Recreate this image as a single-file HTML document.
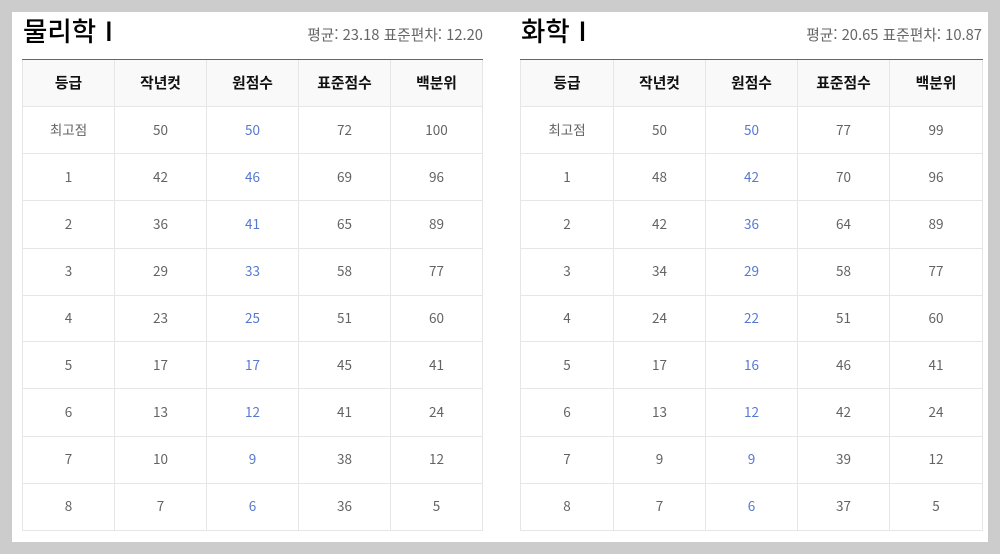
<!DOCTYPE html>
<html lang="ko">
<head>
<meta charset="utf-8">
<title>등급컷</title>
<style>
html,body{margin:0;padding:0;width:1000px;height:554px;overflow:hidden;background:#ccc;}
body{font-family:"Liberation Sans","Noto Sans CJK KR",sans-serif;}
.wrap{position:absolute;left:12px;top:12px;width:976px;height:530px;background:#fff;}
.sec{font-family:"Noto Sans CJK KR","Liberation Sans",sans-serif;}
h2{position:absolute;top:0;margin:0;font-size:26.5px;line-height:36px;font-weight:500;color:#000;white-space:nowrap;}
h2 span{margin-left:-8px;}
.stat{position:absolute;top:25px;font-size:14.75px;line-height:20px;color:#666;white-space:nowrap;text-align:right;}
.rule{position:absolute;top:59px;height:1px;background:#666;z-index:2;}
table{position:absolute;top:59px;border-collapse:collapse;table-layout:fixed;font-family:"Noto Sans CJK KR","Liberation Sans",sans-serif;}
th,td{border:1px solid #e6e6e6;padding:0 0 2px;text-align:center;font-size:13.5px;line-height:16px;color:#636363;font-weight:400;box-sizing:border-box;}
th{background:#f9f9f9;color:#111;font-weight:700;font-size:14.8px;border-top:1px solid #666;padding:0;}
td.b{color:#5579d0;}
tr{height:47px;}
tr.t{height:48px;}
tr.t td{padding-bottom:4px;}
tr.s{height:46px;}
tr.s td{padding-bottom:3px;}
tr.u td{padding-bottom:3px;}
tr.v td{padding-bottom:4px;}
</style>
</head>
<body>
<div class="wrap"></div>
<div class="sec">
<h2 style="left:23px;top:12px">물리학 <span>Ⅰ</span></h2>
<div class="stat" style="right:517px">평균: 23.18 표준편차: 12.20</div>
<div class="rule" style="left:22px;width:461px"></div>
<table style="left:22px;width:461px">
<colgroup><col style="width:92px"><col style="width:92px"><col style="width:92px"><col style="width:92px"><col style="width:92px"></colgroup>
<tr><th>등급</th><th>작년컷</th><th>원점수</th><th>표준점수</th><th>백분위</th></tr>
<tr><td>최고점</td><td>50</td><td class="b">50</td><td>72</td><td>100</td></tr>
<tr><td>1</td><td>42</td><td class="b">46</td><td>69</td><td>96</td></tr>
<tr class="t"><td>2</td><td>36</td><td class="b">41</td><td>65</td><td>89</td></tr>
<tr class="v"><td>3</td><td>29</td><td class="b">33</td><td>58</td><td>77</td></tr>
<tr class="s"><td>4</td><td>23</td><td class="b">25</td><td>51</td><td>60</td></tr>
<tr class="u"><td>5</td><td>17</td><td class="b">17</td><td>45</td><td>41</td></tr>
<tr class="t"><td>6</td><td>13</td><td class="b">12</td><td>41</td><td>24</td></tr>
<tr class="v"><td>7</td><td>10</td><td class="b">9</td><td>38</td><td>12</td></tr>
<tr class="v"><td>8</td><td>7</td><td class="b">6</td><td>36</td><td>5</td></tr>
</table>
</div>
<div class="sec">
<h2 style="left:521px;top:12px">화학 <span>Ⅰ</span></h2>
<div class="stat" style="right:18px">평균: 20.65 표준편차: 10.87</div>
<div class="rule" style="left:520px;width:463px"></div>
<table style="left:520px;width:463px">
<colgroup><col style="width:93px"><col style="width:92px"><col style="width:92px"><col style="width:92px"><col style="width:93px"></colgroup>
<tr><th>등급</th><th>작년컷</th><th>원점수</th><th>표준점수</th><th>백분위</th></tr>
<tr><td>최고점</td><td>50</td><td class="b">50</td><td>77</td><td>99</td></tr>
<tr><td>1</td><td>48</td><td class="b">42</td><td>70</td><td>96</td></tr>
<tr class="t"><td>2</td><td>42</td><td class="b">36</td><td>64</td><td>89</td></tr>
<tr class="v"><td>3</td><td>34</td><td class="b">29</td><td>58</td><td>77</td></tr>
<tr class="s"><td>4</td><td>24</td><td class="b">22</td><td>51</td><td>60</td></tr>
<tr class="u"><td>5</td><td>17</td><td class="b">16</td><td>46</td><td>41</td></tr>
<tr class="t"><td>6</td><td>13</td><td class="b">12</td><td>42</td><td>24</td></tr>
<tr class="v"><td>7</td><td>9</td><td class="b">9</td><td>39</td><td>12</td></tr>
<tr class="v"><td>8</td><td>7</td><td class="b">6</td><td>37</td><td>5</td></tr>
</table>
</div>
</body>
</html>
